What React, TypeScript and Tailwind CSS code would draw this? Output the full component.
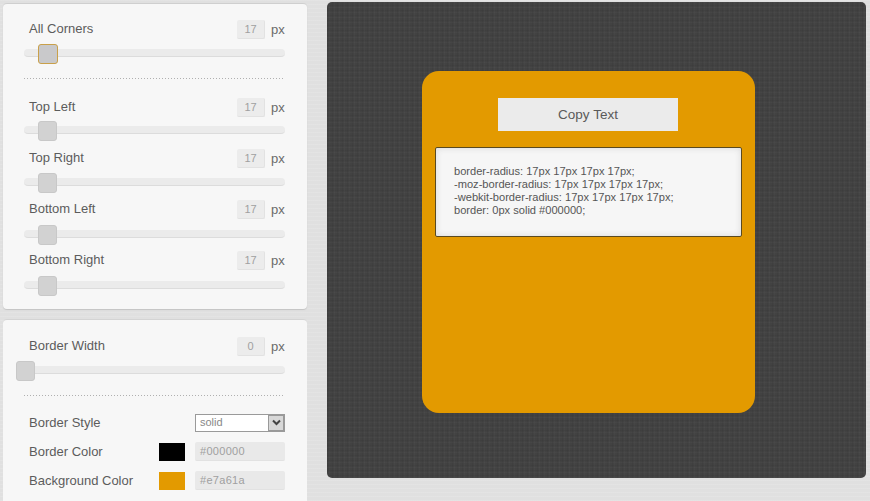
const font = "[font-family:'Liberation_Sans',Arial,sans-serif]"

function PxRow({ label, value, rowClass }: { label: string; value: string; rowClass: string }) {
  return (
    <div className={`flex items-center pl-[5px] ${rowClass}`}>
      <span className="flex-1 -translate-y-px text-[13px] leading-[19px] text-[#5c5c5c]">{label}</span>
      <span className="flex h-[19px] w-[28px] items-center justify-center rounded-[2px] border-r border-b border-[#e2e2e2] bg-[#ececec] text-[11px] text-[#a0a0a0]">{value}</span>
      <span className="ml-[6px] w-[14px] text-[13px] leading-[19px] text-[#6a6a6a]">px</span>
    </div>
  )
}

function Slider({ left, active, className }: { left: number; active?: boolean; className: string }) {
  return (
    <div className={`relative h-[8px] rounded-[4px] border-b border-[#dcdcdc] bg-[#ebebeb] ${className}`}>
      <div
        className={active
          ? 'absolute top-[-5px] h-[20px] w-[20px] rounded-[3px] border border-[#c9a04a] bg-[#c9c9cb]'
          : 'absolute top-[-5px] h-[20px] w-[19px] rounded-[3px] border border-[#c8c8c8] bg-[#d2d2d2]'}
        style={{ left }}
      />
    </div>
  )
}

function Dots({ className }: { className: string }) {
  return <div className={`h-px bg-[repeating-linear-gradient(90deg,#b0b0b0_0px,#b0b0b0_1px,transparent_1px,transparent_3px)] ${className}`} />
}

function ColorRow({ label, swatch, value, rowClass }: { label: string; swatch: string; value: string; rowClass: string }) {
  return (
    <div className={`flex items-center pl-[5px] ${rowClass}`}>
      <span className="flex-1 text-[13px] leading-[19px] text-[#5c5c5c]">{label}</span>
      <span className={`h-[18px] w-[26px] ${swatch}`} />
      <span className="ml-[10px] flex h-[19px] w-[90px] items-center rounded-[2px] border-b border-[#e2e2e2] bg-[#e9e9e9] pl-[5px] text-[11px] tracking-[0.3px] text-[#a0a0a0]">{value}</span>
    </div>
  )
}

export default function App() {
  return (
    <div className={`flex h-[501px] w-[870px] items-start overflow-hidden bg-[#e0e0e0] bg-[repeating-linear-gradient(0deg,rgba(255,255,255,0.12)_0px,rgba(255,255,255,0.12)_1px,transparent_1px,transparent_4px)] pl-[3px] ${font}`}>
      <div className="w-[304px] shrink-0 pt-[3px]">
        <div className="h-[306px] rounded-[4px] border-t border-[#cfcfcf] bg-[#f7f7f7] pr-[22px] pl-[21px] pt-[16px] shadow-[0_1px_1px_#c4c4c4]">
          <PxRow label="All Corners" value="17" rowClass="" />
          <Slider left={14} active className="mt-[10px]" />
          <Dots className="mt-[21px]" />
          <PxRow label="Top Left" value="17" rowClass="mt-[19px]" />
          <Slider left={14} className="mt-[9px]" />
          <PxRow label="Top Right" value="17" rowClass="mt-[15px]" />
          <Slider left={14} className="mt-[10px]" />
          <PxRow label="Bottom Left" value="17" rowClass="mt-[14px]" />
          <Slider left={14} className="mt-[11px]" />
          <PxRow label="Bottom Right" value="17" rowClass="mt-[13px]" />
          <Slider left={14} className="mt-[11px]" />
        </div>
        <div className="mt-[10px] h-[190px] rounded-[4px] border-t border-[#d4d4d4] bg-[#f7f7f7] pr-[22px] pl-[21px] pt-[17px]">
          <PxRow label="Border Width" value="0" rowClass="" />
          <Slider left={-8} className="mt-[10px]" />
          <Dots className="mt-[21px]" />
          <div className="mt-[17px] flex items-center pl-[5px]">
            <span className="flex-1 text-[13px] leading-[19px] text-[#5c5c5c]">Border Style</span>
            <span className="flex h-[18px] w-[90px] items-center justify-between border border-[#9a9a9a] bg-white pl-[4px] text-[11px] text-[#888]">
              solid
              <span className="flex h-[16px] w-[16px] items-center justify-center border border-[#999] bg-[#d8d8d8]">
                <svg width="9" height="7" viewBox="0 0 9 7"><path d="M1 1.5 L4.5 5 L8 1.5" fill="none" stroke="#444" strokeWidth="2" /></svg>
              </span>
            </span>
          </div>
          <ColorRow label="Border Color" swatch="bg-black" value="#000000" rowClass="mt-[10px]" />
          <ColorRow label="Background Color" swatch="bg-[#e39a00]" value="#e7a61a" rowClass="mt-[10px]" />
        </div>
      </div>
      <div className="mt-[2px] ml-[20px] h-[476px] w-[539px] shrink-0 rounded-[5px] bg-[#424242] bg-[repeating-linear-gradient(0deg,rgba(255,255,255,0.02)_0px,rgba(255,255,255,0.02)_1px,transparent_1px,transparent_2px,rgba(0,0,0,0.04)_2px,rgba(0,0,0,0.04)_3px,transparent_3px,transparent_5px),repeating-linear-gradient(90deg,rgba(0,0,0,0.05)_0px,rgba(0,0,0,0.05)_1px,transparent_1px,transparent_2px,rgba(255,255,255,0.02)_2px,rgba(255,255,255,0.02)_3px,transparent_3px,transparent_5px)] pt-[69px] pl-[95px]">
        <div className="flex h-[342px] w-[333px] flex-col rounded-[17px] bg-[#e39a00] px-[13px] pt-[27px]">
          <button className="ml-[63px] h-[33px] w-[180px] bg-[#ebebeb] pt-px text-[13.5px] text-[#5a5a5a]">Copy Text</button>
          <div className="mt-[16px] h-[90px] w-full rounded-[2px] border border-[#5a4a20] bg-[#f6f6f6] pt-[17px] pl-[18px] text-[11.1px] leading-[13px] text-[#555] shadow-[inset_0_0_6px_#d8d8d8]">
            <div>border-radius: 17px 17px 17px 17px;</div>
            <div>-moz-border-radius: 17px 17px 17px 17px;</div>
            <div>-webkit-border-radius: 17px 17px 17px 17px;</div>
            <div>border: 0px solid #000000;</div>
          </div>
        </div>
      </div>
    </div>
  )
}
